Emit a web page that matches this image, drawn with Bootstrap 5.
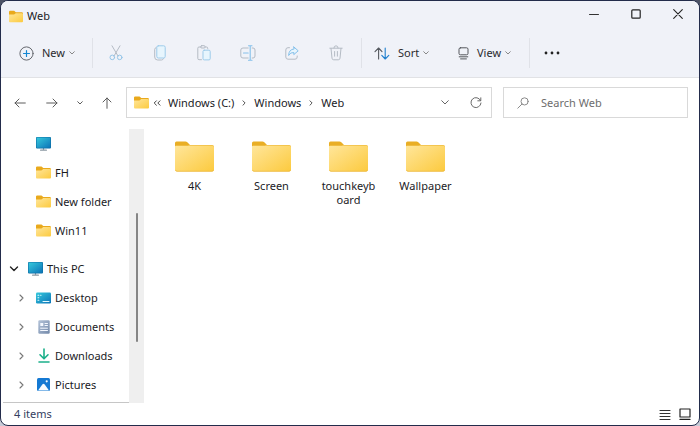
<!DOCTYPE html>
<html lang="en">
<head>
<meta charset="utf-8">
<meta name="viewport" content="width=device-width, initial-scale=1">
<title>Web</title>
<link rel="stylesheet" href="https://cdn.jsdelivr.net/npm/bootstrap@5.3.0/dist/css/bootstrap.min.css">
<style>
body{font-family:"Noto Sans","Open Sans",sans-serif;font-size:11px;line-height:14px;color:#1b1b1f;background:linear-gradient(#4d5366 50%,#c6cad6 50%)}
svg{display:block;flex:none;fill:none;stroke-linecap:round;stroke-linejoin:round}
a{color:inherit;text-decoration:none}
.explorer{border:1px solid #232c4b;border-radius:8px;background:#fff}
.titlebar{height:28px;background:#f0f2f8}
.titlebar h1{font-size:11px;line-height:14px}
.tool,.winbtn{border:0;padding:0;background:none;color:#2a2a2e;font-size:11px;line-height:14px}
.winbtn{width:42px;height:26px;display:flex;align-items:center;justify-content:center}
.toolbar{height:49px;background:#f0f2f8;border-bottom:1px solid #e1e2e5}
.tool{height:31px;display:flex;align-items:center;justify-content:center}
.tool-icon{width:44px}
.tool:disabled{color:#bcc6d2}
.tool-new{width:91px;padding-left:18px;justify-content:flex-start}
.tool-sort{width:83px;padding-left:12px;justify-content:flex-start}
.tool-view{width:84px;padding-left:13px;justify-content:flex-start}
.divider{width:1px;height:30px;background:#e0e2e8}
.filecmds{padding:0 3px 0 1px}
.locbar{padding:9px 11px 8px 3px}
.navbtn{width:32px}
.navbtn-recent{width:24px}
.navbtn-up{width:30px}
.address,.searchbox{height:31px;border:1px solid #d9d9d9;background:#fff}
.address{padding-left:7px}
.addressbtn{width:31px}
.crumbs{margin-left:7px}
.searchbox{width:185px;margin-left:11px;padding-left:13px}
.searchbox input{border:0;outline:0;padding:0;font-size:11px;line-height:14px;background:none;color:#333}
.searchbox input::placeholder{color:#6d6d6d;opacity:1}
.sidebar{width:143px}
.tree{border-bottom:1px solid #c6c6c6;margin-left:2px;padding-top:3px}
.tree a{height:29px;display:flex;align-items:center;white-space:nowrap}
.tree ul+ul{margin-top:9px}
.quick a{padding-left:33px}
.tree .glyph{width:15px;margin-right:4px;display:flex;justify-content:center}
.twist{width:16px;margin-left:11px;margin-right:6px}
.root .twist{margin-left:3px}
.track{width:15px;background:#efefef;padding-top:84px;margin-top:3px}
.thumb{width:2px;height:68%;background:#858585;border-radius:1px}
.files{padding:15px 0 0 12px}
.tile{width:77px;text-align:center}
.tile span{width:56px;word-break:break-all;margin-top:7px}
.statusbar{height:22px;padding:0 8px 0 13px;color:#34405f}
</style>
<script src="https://cdn.jsdelivr.net/npm/bootstrap@5.3.0/dist/js/bootstrap.bundle.min.js"></script>
</head>
<body>
<svg width="0" height="0" class="position-absolute" aria-hidden="true">
<defs>
<linearGradient id="gold" x1="0" y1="0" x2="1" y2="1"><stop stop-color="#ffe69b"/><stop offset="1" stop-color="#fcca3e"/></linearGradient>
<linearGradient id="aqua" x1="0" y1="0" x2="1" y2="1"><stop stop-color="#36c9dc"/><stop offset="1" stop-color="#0c74b8"/></linearGradient>
<linearGradient id="slate" x1="0" y1="0" x2="1" y2="1"><stop stop-color="#b5c4d9"/><stop offset="1" stop-color="#7288a9"/></linearGradient>
<symbol id="folder" viewBox="0 0 15 13"><path d="M0 1.6Q0 .4 1.2.4H5.5L7.3 2H13.6Q15 2 15 3.2V7H0Z" fill="#e9a91c"/><path d="M0 4.4H5.4L7.3 3H14Q15 3 15 4V11.6Q15 12.6 14 12.6H1Q0 12.6 0 11.6Z" fill="url(#gold)"/></symbol>
<symbol id="bigfolder" viewBox="0 0 39 31"><path d="M0 2Q0 .5 1.5.5H10.5Q11.5.5 12.3 1.3L15 4H37Q39 4 39 6V14H0Z" fill="#e9ae25"/><path d="M0 5.6Q0 4.8 1 4.8H12.2Q13 4.8 13.8 4.6L15 4.4H37.3Q39 4.4 39 6.4V28.7Q39 30.5 37.3 30.5H1.7Q0 30.5 0 28.7Z" fill="url(#gold)"/><path d="M.5 29.3Q1 30.3 2 30.3H37Q38 30.3 38.5 29.3" stroke="#e9b63d" stroke-width=".7" fill="none"/></symbol>
<symbol id="monitor" viewBox="0 0 15 14"><path d="M7.5 10V12.8M4.6 13.2H10.4" stroke="#8b98a3" stroke-width="1.2"/><rect width="15" height="11.4" rx="1" fill="#0b6ea5"/><rect x=".6" y=".6" width="13.8" height="10.2" rx=".5" fill="url(#aqua)"/></symbol>
<symbol id="down" viewBox="0 0 6 4"><path d="M.7.7 3 3 5.3.7" stroke="currentColor"/></symbol>
<symbol id="right" viewBox="0 0 5 8"><path d="M1 1 4 4 1 7" stroke="currentColor" stroke-width="1.1"/></symbol>
</defs>
</svg>
<div class="explorer min-vh-100 d-flex flex-column overflow-hidden">
<header class="titlebar d-flex align-items-start">
<div class="d-flex align-items-center flex-grow-1 ps-2 pt-1">
<svg class="mt-1" width="14" height="13"><use href="#folder"/></svg>
<h1 class="mb-0 ms-1 mt-1 fw-normal">Web</h1>
</div>
<button class="winbtn" type="button" aria-label="Minimize"><svg width="10" height="10" stroke="#333"><path d="M.5 5.5H9.5"/></svg></button>
<button class="winbtn" type="button" aria-label="Maximize"><svg width="10" height="10" stroke="#222" stroke-width="1.2"><rect x=".8" y=".8" width="8.4" height="8.4" rx="1"/></svg></button>
<button class="winbtn" type="button" aria-label="Close"><svg width="10" height="10" stroke="#222" stroke-width="1.1"><path d="M.7.7 9.3 9.3M9.3.7.7 9.3"/></svg></button>
</header>
<div class="toolbar d-flex align-items-center" role="toolbar" aria-label="Commands">
<button class="tool tool-new" type="button"><svg width="15" height="15"><circle cx="7.5" cy="7.5" r="6.6" stroke="#65686e"/><path d="M7.5 4.5V10.5M4.5 7.5H10.5" stroke="#1587d2" stroke-width="1.2"/></svg><span class="ms-2 me-1">New</span><svg width="6" height="4" color="#888"><use href="#down"/></svg></button>
<div class="divider"></div>
<div class="filecmds d-flex">
<button class="tool tool-icon" type="button" disabled aria-label="Cut"><svg width="14" height="16"><path d="M3 .8 9 11M11 .8 5 11" stroke="#b4bbc4"/><circle cx="3.3" cy="12.4" r="2.3" stroke="#95c5e7"/><circle cx="10.7" cy="12.4" r="2.3" stroke="#95c5e7"/></svg></button>
<button class="tool tool-icon" type="button" disabled aria-label="Copy"><svg width="12" height="16"><path d="M2.3 2.3Q.7 3 .7 4.5V12Q.7 15 3.7 15H7.5Q9 15 9.6 13.6" stroke="#b4bbc4"/><rect x="2.8" y=".8" width="8.4" height="12.2" rx="1.5" fill="#e7f5fd" stroke="#9dcbea"/></svg></button>
<button class="tool tool-icon" type="button" disabled aria-label="Paste"><svg width="14" height="16"><path d="M4 2H2Q.8 2 .8 3.2V13.4Q.8 14.7 2 14.7H4.5M8 2H9.5Q10.7 2 10.7 3.2V3.8" stroke="#b4bbc4"/><rect x="3.7" y=".7" width="4.4" height="2.3" rx="1" stroke="#b4bbc4"/><rect x="6" y="5.2" width="7.2" height="9.7" rx="1.2" fill="#e7f5fd" stroke="#9dcbea"/></svg></button>
<button class="tool tool-icon" type="button" disabled aria-label="Rename"><svg width="16" height="16"><path d="M8.2 3H3Q.8 3 .8 5V11Q.8 13 3 13H8.2M12.2 3H13Q15 3 15 5V11Q15 13 13 13H12.2" stroke="#b4bbc4"/><path d="M8.5.8H12M8.5 15.2H12M10.2.8V15.2M3.5 8H8.2" stroke="#85c0ea" stroke-width="1.1"/></svg></button>
<button class="tool tool-icon" type="button" disabled aria-label="Share"><svg width="14" height="14"><path d="M4.5 1.7H3Q.8 1.7 .8 4V11Q.8 13.2 3 13.2H10Q12.2 13.2 12.2 11V10" stroke="#b4bbc4"/><path d="M8.8.9 13.2 4.8 8.8 8.6V6.5Q5.4 6.1 3.6 9.5 3.8 3.4 8.8 3Z" fill="#e7f5fd" stroke="#85c0ea"/></svg></button>
<button class="tool tool-icon" type="button" disabled aria-label="Delete"><svg width="14" height="16" stroke="#b4bbc4"><path d="M.8 3.2H13.2M4.9 3Q4.9 .8 7 .8T9.1 3M2 3.4 3 13.2Q3.2 14.8 4.7 14.8H9.3Q10.8 14.8 11 13.2L12 3.4M5.6 6.5V11.2M8.4 6.5V11.2"/></svg></button>
</div>
<div class="divider"></div>
<button class="tool tool-sort" type="button"><svg width="16" height="13" stroke-width="1.1"><path d="M4.6 12V1M1 4.6 4.6 1 8 4.6" stroke="#55595f"/><path d="M11.2 1V12M7.8 8.4 11.2 12 14.8 8.4" stroke="#1f7fce"/></svg><span class="ms-2 me-1">Sort</span><svg width="6" height="4" color="#888"><use href="#down"/></svg></button>
<button class="tool tool-view" type="button"><svg width="11" height="13" stroke="#54575c"><rect x="1" y=".8" width="9" height="7" rx="1.4"/><path d="M1.2 9.8H9.8M2.6 11.9H8.4"/></svg><span class="ms-2 me-1">View</span><svg width="6" height="4" color="#888"><use href="#down"/></svg></button>
<div class="divider"></div>
<button class="tool tool-icon" type="button" aria-label="See more"><svg width="16" height="4"><g fill="#222"><circle cx="2" cy="2" r="1.4"/><circle cx="8" cy="2" r="1.4"/><circle cx="14" cy="2" r="1.4"/></g></svg></button>
</div>
<div class="locbar d-flex align-items-center">
<button class="tool navbtn" type="button" aria-label="Back"><svg width="12" height="10" stroke="#5c5c5c"><path d="M11.3 5H1M5 1 1 5 5 9"/></svg></button>
<button class="tool navbtn" type="button" aria-label="Forward"><svg width="12" height="10" stroke="#5c5c5c"><path d="M.7 5H11M7 1 11 5 7 9"/></svg></button>
<button class="tool navbtn-recent" type="button" aria-label="Recent locations"><svg width="6" height="4" color="#5c5c5c"><use href="#down"/></svg></button>
<button class="tool navbtn-up" type="button" aria-label="Up"><svg width="10" height="12" stroke="#5c5c5c"><path d="M5 11.3V1M1 5 5 1 9 5"/></svg></button>
<nav class="address d-flex align-items-center flex-grow-1 ms-1" aria-label="Address">
<svg width="15" height="13"><use href="#folder"/></svg>
<svg class="ms-1" width="8" height="6" stroke="#444"><path d="M3.4.8 1.2 3 3.4 5.2M7 .8 4.8 3 7 5.2"/></svg>
<div class="crumbs d-flex align-items-center gap-2 flex-grow-1">
<a href="#">Windows (C:)</a><svg width="4" height="6" color="#333" viewBox="0 0 5 8"><use href="#right"/></svg>
<a href="#">Windows</a><svg width="4" height="6" color="#333" viewBox="0 0 5 8"><use href="#right"/></svg>
<a href="#">Web</a>
</div>
<button class="tool addressbtn" type="button" aria-label="Previous locations"><svg width="8" height="5" stroke="#666"><path d="M.7.7 4 4 7.3.7"/></svg></button>
<button class="tool addressbtn" type="button" aria-label="Refresh"><svg width="12" height="12" stroke="#6b6b6b"><path d="M10.6 3.6A5 5 0 1 0 11 6M10.8.8V3.8H7.8"/></svg></button>
</nav>
<label class="searchbox d-flex align-items-center"><svg width="12" height="12" stroke="#8a8a8a"><circle cx="7.6" cy="4.4" r="3.6"/><path d="M5 7 .8 11.2"/></svg><input class="ms-2 ps-1 w-75" type="search" placeholder="Search Web" aria-label="Search Web"></label>
</div>
<div class="d-flex flex-grow-1">
<aside class="sidebar d-flex">
<nav class="tree flex-grow-1" aria-label="Folders">
<ul class="list-unstyled mb-0 quick">
<li><a href="#" aria-label="Desktop shortcut"><span class="glyph"><svg width="15" height="14"><use href="#monitor"/></svg></span></a></li>
<li><a href="#"><span class="glyph"><svg width="15" height="13"><use href="#folder"/></svg></span>FH</a></li>
<li><a href="#"><span class="glyph"><svg width="15" height="13"><use href="#folder"/></svg></span>New folder</a></li>
<li><a href="#"><span class="glyph"><svg width="15" height="13"><use href="#folder"/></svg></span>Win11</a></li>
</ul>
<ul class="list-unstyled mb-0">
<li class="root"><a href="#"><svg class="twist" width="16" height="6" stroke="#222" stroke-width="1.4"><path d="M4.5 1 8 4.5 11.5 1"/></svg><span class="glyph"><svg width="15" height="14"><use href="#monitor"/></svg></span>This PC</a></li>
<li><a href="#"><svg class="twist" width="16" height="8" color="#777"><use href="#right" x="5" width="5" height="8"/></svg><span class="glyph"><svg width="15" height="12"><rect y=".5" width="15" height="11" rx="1.2" fill="url(#aqua)"/><path d="M2 3.2H2.8M2 5.7H2.8M2 8.2H2.8M4.6 3.2H5M7 9.5H13" stroke="#e5fbff" stroke-width="1.1"/></svg></span>Desktop</a></li>
<li><a href="#"><svg class="twist" width="16" height="8" color="#777"><use href="#right" x="5" width="5" height="8"/></svg><span class="glyph"><svg width="12" height="14"><rect x=".3" y=".3" width="11.4" height="13.4" rx="1.2" fill="url(#slate)"/><rect x="2.3" y="3" width="3" height="3" fill="#f4f8ff"/><path d="M7 3.5H9.5M7 5.5H9.5M2.6 8.2H9.5M2.6 10.5H9.5" stroke="#f4f8ff"/></svg></span>Documents</a></li>
<li><a href="#"><svg class="twist" width="16" height="8" color="#777"><use href="#right" x="5" width="5" height="8"/></svg><span class="glyph"><svg width="12" height="15" stroke="#1bb08a" stroke-width="1.6"><path d="M6 1V10.5M2 6.8 6 10.8 10 6.8M1 14H11"/></svg></span>Downloads</a></li>
<li><a href="#"><svg class="twist" width="16" height="8" color="#777"><use href="#right" x="5" width="5" height="8"/></svg><span class="glyph"><svg width="13" height="13"><rect width="13" height="13" rx="1.5" fill="#1479d3"/><path d="M1 12.4 5.5 6.3Q6.5 5.2 7.5 6.3L12 12.4Z" fill="#f5fbff"/><circle cx="9.7" cy="3.3" r="1.1" fill="#f5fbff"/></svg></span>Pictures</a></li>
</ul>
</nav>
<div class="track d-flex justify-content-center" aria-hidden="true"><div class="thumb"></div></div>
</aside>
<main class="files d-flex flex-wrap align-content-start flex-grow-1">
<a href="#" class="tile d-flex flex-column align-items-center"><svg width="39" height="31"><use href="#bigfolder"/></svg><span>4K</span></a>
<a href="#" class="tile d-flex flex-column align-items-center"><svg width="39" height="31"><use href="#bigfolder"/></svg><span>Screen</span></a>
<a href="#" class="tile d-flex flex-column align-items-center"><svg width="39" height="31"><use href="#bigfolder"/></svg><span>touchkeyboard</span></a>
<a href="#" class="tile d-flex flex-column align-items-center"><svg width="39" height="31"><use href="#bigfolder"/></svg><span>Wallpaper</span></a>
</main>
</div>
<footer class="statusbar d-flex align-items-center">
<span class="flex-grow-1">4 items</span>
<button class="tool" type="button" aria-label="Details view"><svg width="12" height="11" stroke="#333"><path d="M1 1.5H11M1 4.5H11M1 7.5H11M1 10.5H11"/></svg></button>
<button class="tool ms-2" type="button" aria-label="Large icons view"><svg width="12" height="12" stroke="#222" stroke-width="1.2"><rect x="1" y="1" width="10" height="8"/><path d="M1 11.4H11"/></svg></button>
</footer>
</div>
</body>
</html>
